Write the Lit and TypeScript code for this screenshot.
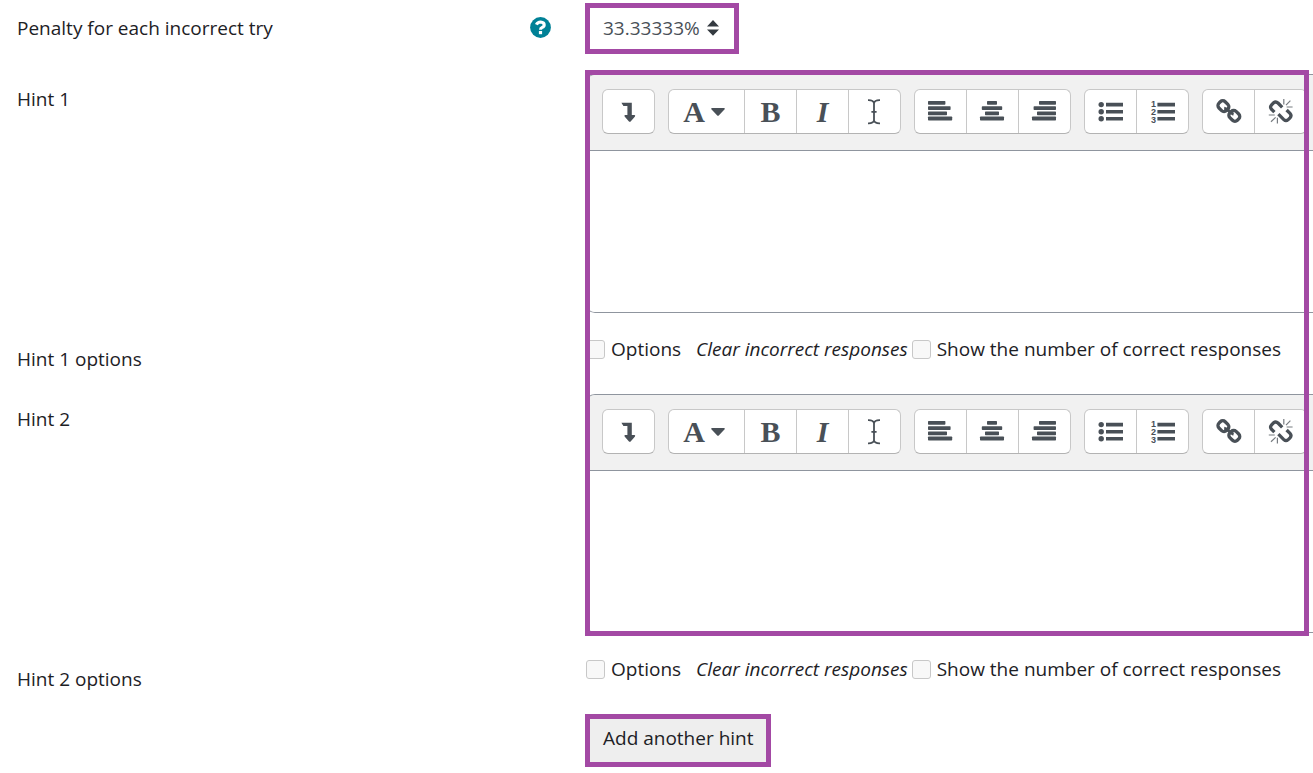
import { LitElement, html, svg, css } from "lit";
import { customElement, property } from "lit/decorators.js";

const icons: Record<string, unknown> = {
  toggle: svg`<path d="M5.4 3.8H15.8V16H18.6Q19.8 16.6 18.8 17.8L14.4 22.8H13.2L8.8 17.8Q7.8 16.6 9 16H11.4V7H7.4Z"/>`,
  clear: svg`<path d="M6 1.2Q11.2 1 12 4.2Q12.8 1 18 1.2M6 24.4Q11.2 24.6 12 21.6Q12.8 24.6 18 24.4M12 4V22M9.4 12.8H14.6" fill="none" stroke="currentColor" stroke-width="1.8"/>`,
  left: svg`<rect x="0" y="2" width="17.4" height="3.8" rx=".7"/><rect x="0" y="7.2" width="22.6" height="3.8" rx=".7"/><rect x="0" y="12.4" width="19" height="3.8" rx=".7"/><rect x="0" y="17.6" width="24.2" height="3.8" rx=".7"/>`,
  center: svg`<rect x="7" y="2" width="10" height="3.8" rx=".7"/><rect x="1.8" y="7.2" width="20.4" height="3.8" rx=".7"/><rect x="5" y="12.4" width="14" height="3.8" rx=".7"/><rect x="0" y="17.6" width="24" height="3.8" rx=".7"/>`,
  right: svg`<rect x="7" y="2" width="17" height="3.8" rx=".7"/><rect x="1.6" y="7.2" width="22.4" height="3.8" rx=".7"/><rect x="5" y="12.4" width="19" height="3.8" rx=".7"/><rect x="0" y="17.6" width="24" height="3.8" rx=".7"/>`,
  bullets: svg`<circle cx="3.2" cy="5.6" r="2.7"/><circle cx="3.2" cy="12.7" r="2.7"/><circle cx="3.2" cy="19.7" r="2.7"/><path d="M8 3.8h17v3.7H8zM8 10.9h17v3.7H8zM8 17.9h17v3.7H8z"/>`,
  numbers: svg`<path d="M7.4 3.8h17.6v3.7H7.4zM7.4 10.9h17.6v3.7H7.4zM7.4 17.9h17.6v3.7H7.4z"/><text x="1" y="8">1</text><text x="1" y="16">2</text><text x="1" y="24">3</text>`,
  link: svg`<g fill="none" stroke="currentColor" stroke-width="3.3"><rect x="2.1" y="2.8" width="10.6" height="8.8" rx="3.4" transform="rotate(45 7.4 7.2)"/><rect x="13" y="12.4" width="10.6" height="8.8" rx="3.4" transform="rotate(45 18.3 16.8)"/><path d="M8.2 9.2Q10.4 9.4 12.9 12T17.6 15.2" stroke-width="3"/></g>`,
  unlink: svg`<g fill="none" stroke="currentColor"><path stroke-width="3.3" d="M6.4 13.2L3.4 10.2Q1.6 8 3.6 5.8L5.6 3.8Q7.8 2 10 4L14.2 8.4M10.4 15.2L15.8 20.6Q18 22.6 20.2 20.6L22 18.8Q24 16.6 22 14.4L18.6 11"/><path stroke-width="1.2" opacity=".75" d="M15.8 0v5.6M22.4 1.6l-4.4 4.6M24.6 8h-6M9.4 24.4v-5.6M3 22.8l4.6-4.4M.8 16h6"/></g>`,
};

const groups: [string, string][][] = [
  [["toggle", "Show more buttons"]],
  [["style", "Paragraph styles"], ["bold", "Bold"], ["italic", "Italic"], ["clear", "Clear formatting"]],
  [["left", "Align left"], ["center", "Center"], ["right", "Align right"]],
  [["bullets", "Unordered list"], ["numbers", "Ordered list"]],
  [["link", "Link"], ["unlink", "Unlink"]],
];

@customElement("hint-editor")
class HintEditor extends LitElement {
  @property() name = "";

  static styles = css`
    :host { display: block; min-width: 0; }
    .editor {
      box-sizing: border-box;
      border: 1px solid #8f959e;
      border-right: 0;
      border-radius: 10px 0 0 10px;
      overflow: hidden;
    }
    .toolbar {
      display: flex;
      gap: 13px;
      padding: 14px 0 16px 16px;
      background: #f1f1f1;
      border-bottom: 1px solid #8f959e;
    }
    .group {
      display: flex;
      flex: none;
      box-sizing: border-box;
      height: 45px;
      background: #fff;
      border: 1px solid #c8c8c8;
      border-bottom-color: #b3b3b3;
      border-radius: 6px;
      overflow: hidden;
    }
    .tool {
      display: flex;
      align-items: center;
      justify-content: center;
      gap: 6px;
      box-sizing: border-box;
      width: 51px;
      padding: 0;
      border: 0;
      background: none;
      color: #495057;
      font: bold 30px/40px "Liberation Serif", serif;
    }
    .tool + .tool { width: 52px; border-left: 1px solid #c8c8c8; }
    .tool.style { width: 75px; padding-right: 5px; }
    .italic { font-style: italic; }
    .glyph { width: 26px; height: 26px; fill: currentColor; overflow: visible; }
    .glyph text { font: bold 9px/9px "Liberation Sans", sans-serif; }
    .caret { width: 14px; height: 8px; fill: currentColor; }
    .area {
      display: block;
      box-sizing: border-box;
      width: 100%;
      height: 161px;
      padding: 8px 12px;
      border: 0;
      outline: 0;
      resize: none;
      background: #fff;
      font: 19px/30px "Open Sans", sans-serif;
    }
  `;

  face(kind: string) {
    if (kind === "style")
      return html`A<svg class="caret" viewBox="0 0 14 8"><path d="M.8 0H13.2Q14.2.4 13.4 1.4L7.8 7.4Q7 8.2 6.2 7.4L.6 1.4Q-.2.4.8 0Z" /></svg>`;
    if (kind === "bold") return "B";
    if (kind === "italic") return "I";
    return html`<svg class="glyph" viewBox="0 0 26 26">${icons[kind]}</svg>`;
  }

  render() {
    return html`<div class="editor">
      <div class="toolbar" role="toolbar">
        ${groups.map(
          (g) => html`<div class="group">
            ${g.map(([kind, label]) => html`<button type="button" class="tool ${kind}" aria-label=${label}>${this.face(kind)}</button>`)}
          </div>`
        )}
      </div>
      <textarea class="area" aria-label=${this.name}></textarea>
    </div>`;
  }
}

@customElement("app-root")
class AppRoot extends LitElement {
  static styles = css`
    :host {
      display: block;
      overflow: hidden;
      background: #fff;
      color: #1d2125;
      font: 19px/30px "Open Sans", sans-serif;
    }
    .form { display: flex; flex-direction: column; gap: 20px; padding: 3px 0 6px 17px; }
    .hints { position: relative; display: flex; flex-direction: column; gap: 20px; }
    .row {
      display: grid;
      grid-template-columns: minmax(0, 568fr) minmax(0, 728fr);
      align-items: start;
    }
    .tall { min-height: 240px; }
    .name { display: flex; justify-content: space-between; align-items: center; padding: 10px 34px 0 0; }
    .help { display: flex; padding: 0 0 2px; border: 0; background: none; }
    .disc { width: 21px; height: 21px; }
    .picker { display: grid; width: 154px; align-items: center; }
    .select {
      grid-area: 1 / 1;
      appearance: none;
      box-sizing: border-box;
      width: 100%;
      height: 51px;
      padding: 0 13px 2px;
      border: 5px solid #a349a4;
      background: #fff;
      color: #495057;
      font: inherit;
    }
    .arrows { grid-area: 1 / 1; justify-self: end; width: 12px; height: 16px; margin: 0 20px 2px 0; pointer-events: none; }
    .options { display: flex; align-items: center; white-space: nowrap; }
    .options label { display: flex; align-items: center; gap: 6px; }
    .clear { font-style: italic; margin: 0 4px 0 15px; }
    .check {
      appearance: none;
      box-sizing: border-box;
      width: 19px;
      height: 19px;
      margin: 0;
      border: 1px solid #c8c8c8;
      border-radius: 3px;
      background: #f8f8f8;
    }
    .first { margin-left: 1px; }
    .frame {
      position: absolute;
      inset: -4px 4px -2px 568px;
      border: 5px solid #a349a4;
      pointer-events: none;
    }
    .add {
      grid-column: 2;
      justify-self: start;
      height: 53px;
      padding: 0 12px 5px 13px;
      border: 5px solid #a349a4;
      background: #eee;
      color: #1d2125;
      font: inherit;
    }
  `;

  editor(n: number) {
    return html`<div class="row tall">
      <div class="name">Hint ${n}</div>
      <hint-editor name="Hint ${n}"></hint-editor>
    </div>`;
  }

  options(n: number) {
    return html`<div class="row">
      <div class="name">Hint ${n} options</div>
      <div class="options">
        <label class="first"><input class="check" type="checkbox" disabled />Options</label>
        <span class="clear">Clear incorrect responses</span>
        <label><input class="check" type="checkbox" disabled />Show the number of correct responses</label>
      </div>
    </div>`;
  }

  render() {
    return html`<form class="form">
      <div class="row">
        <div class="name">
          <label for="penalty">Penalty for each incorrect try</label>
          <button type="button" class="help" aria-label="Help">
            <svg class="disc" viewBox="0 0 21 21"><circle cx="10.5" cy="10.5" r="10.4" fill="#008196" /><path d="M6.4 7.7Q7.6 5 10.6 5Q14.2 5.2 14.2 7.9Q14.2 9.6 12.2 10.4Q10.5 11.1 10.5 12.8" fill="none" stroke="#fff" stroke-width="3.1" /><rect x="8.9" y="14" width="3.2" height="3.2" fill="#fff" /></svg>
          </button>
        </div>
        <div class="picker">
          <select class="select" id="penalty"><option>33.33333%</option></select>
          <svg class="arrows" viewBox="0 0 12 16"><path d="M6 0L12 6.4H0ZM0 9.4H12L6 15.8Z" fill="#343a40" /></svg>
        </div>
      </div>
      <div class="hints">
        ${this.editor(1)} ${this.options(1)} ${this.editor(2)}
        <div class="frame"></div>
      </div>
      ${this.options(2)}
      <div class="row"><button type="button" class="add">Add another hint</button></div>
    </form>`;
  }
}
